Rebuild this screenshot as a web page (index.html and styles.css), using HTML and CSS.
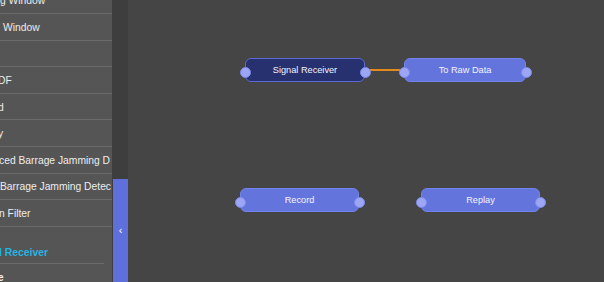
FILE: index.html
```html
<!DOCTYPE html>
<html>
<head>
<meta charset="utf-8">
<link rel="stylesheet" href="styles.css">
</head>
<body>
<div class="app">
  <aside class="sidebar">
    <div class="list">
      <div class="row"><span class="label">g Window</span></div>
      <div class="row"><span class="label gap">Window</span></div>
      <div class="row"><span class="label"></span></div>
      <div class="row"><span class="label cut">DF</span></div>
      <div class="row"><span class="label cut">d</span></div>
      <div class="row"><span class="label cut">y</span></div>
      <div class="row"><span class="label cut1">ced Barrage Jamming D</span></div>
      <div class="row"><span class="label">Barrage Jamming Detec</span></div>
      <div class="row"><span class="label cut1">n Filter</span></div>
    </div>
    <div class="section">
      <div class="heading">l Receiver</div>
      <div class="sub">e</div>
    </div>
  </aside>
  <div class="gutter">
    <div class="toggle">&#8249;</div>
  </div>
  <main class="canvas">
    <svg class="wire" width="36" height="6" viewBox="0 0 36 6"><line x1="0" y1="3" x2="36" y2="3" stroke="#e38a1c" stroke-width="2.2"/></svg>
    <div class="node dark n1"><span class="port l"></span>Signal Receiver<span class="port r"></span></div>
    <div class="node n2"><span class="port l"></span>To Raw Data<span class="port r"></span></div>
    <div class="node n3"><span class="port l"></span>Record<span class="port r"></span></div>
    <div class="node n4"><span class="port l"></span>Replay<span class="port r"></span></div>
  </main>
</div>
</body>
</html>
```
FILE: styles.css
```css
html, body {
  margin: 0;
  padding: 0;
  background: #454545;
}
.app {
  display: flex;
  width: 604px;
  height: 282px;
  overflow: hidden;
  font-family: "Liberation Sans", Arial, sans-serif;
}
.sidebar {
  width: 112px;
  flex: none;
  background: #555555;
  overflow: hidden;
  display: flex;
  flex-direction: column;
}
.list {
  margin-top: -12.6px;
}
.row {
  height: 25.6px;
  border-bottom: 1px solid #6a6a6a;
  display: flex;
  align-items: center;
  white-space: nowrap;
  overflow: hidden;
}
.label {
  color: #ededed;
  font-size: 10.3px;
  padding-top: 1px;
}
.label.gap { padding-left: 3px; }
.label.cut { margin-left: -2px; }
.label.cut1 { margin-left: -1px; }
.section {
  padding-top: 20px;
}
.heading {
  color: #25b4e2;
  font-weight: bold;
  font-size: 10.4px;
  margin-left: -1px;
  width: 105px;
  padding-bottom: 5px;
  border-bottom: 1px solid #6a6a6a;
  white-space: nowrap;
}
.sub {
  color: #f2f2f2;
  font-size: 10px;
  margin-top: 8px;
  margin-left: -2px;
  font-weight: bold;
}
.gutter {
  width: 16px;
  flex: none;
  background: #3e3e3e;
  display: flex;
  flex-direction: column;
  padding-top: 179px;
  box-sizing: border-box;
}
.toggle {
  flex: 1;
  margin-left: 1px;
  background: #5f6fdc;
  color: #ffffff;
  font-size: 11px;
  display: flex;
  align-items: center;
  justify-content: center;
  padding-bottom: 2px;
  box-sizing: border-box;
}
.canvas {
  flex: 1;
  position: relative;
  background: #454545;
}
.wire {
  position: absolute;
  left: 240px;
  top: 67px;
}
.node {
  position: absolute;
  height: 24px;
  box-sizing: border-box;
  border-radius: 6px;
  background: #6474dd;
  border: 1.5px solid #7383ea;
  color: #f3f4ff;
  font-size: 9.2px;
  display: flex;
  align-items: center;
  justify-content: center;
  padding-bottom: 1px;
}
.node.dark {
  background: #28316f;
  border-color: #5c6ad2;
}
.n1 { left: 117px; top: 58px; width: 120px; }
.n2 { left: 276px; top: 58px; width: 122px; }
.n3 { left: 112px; top: 188px; width: 119px; }
.n4 { left: 293px; top: 188px; width: 119px; }
.port {
  position: absolute;
  top: 50%;
  width: 11px;
  height: 11px;
  margin-top: -3.5px;
  border-radius: 50%;
  background: #9ca6f4;
  border: 1px solid #7c8aec;
  box-sizing: border-box;
}
.port.l { left: -6.5px; }
.port.r { right: -6.5px; }
```
